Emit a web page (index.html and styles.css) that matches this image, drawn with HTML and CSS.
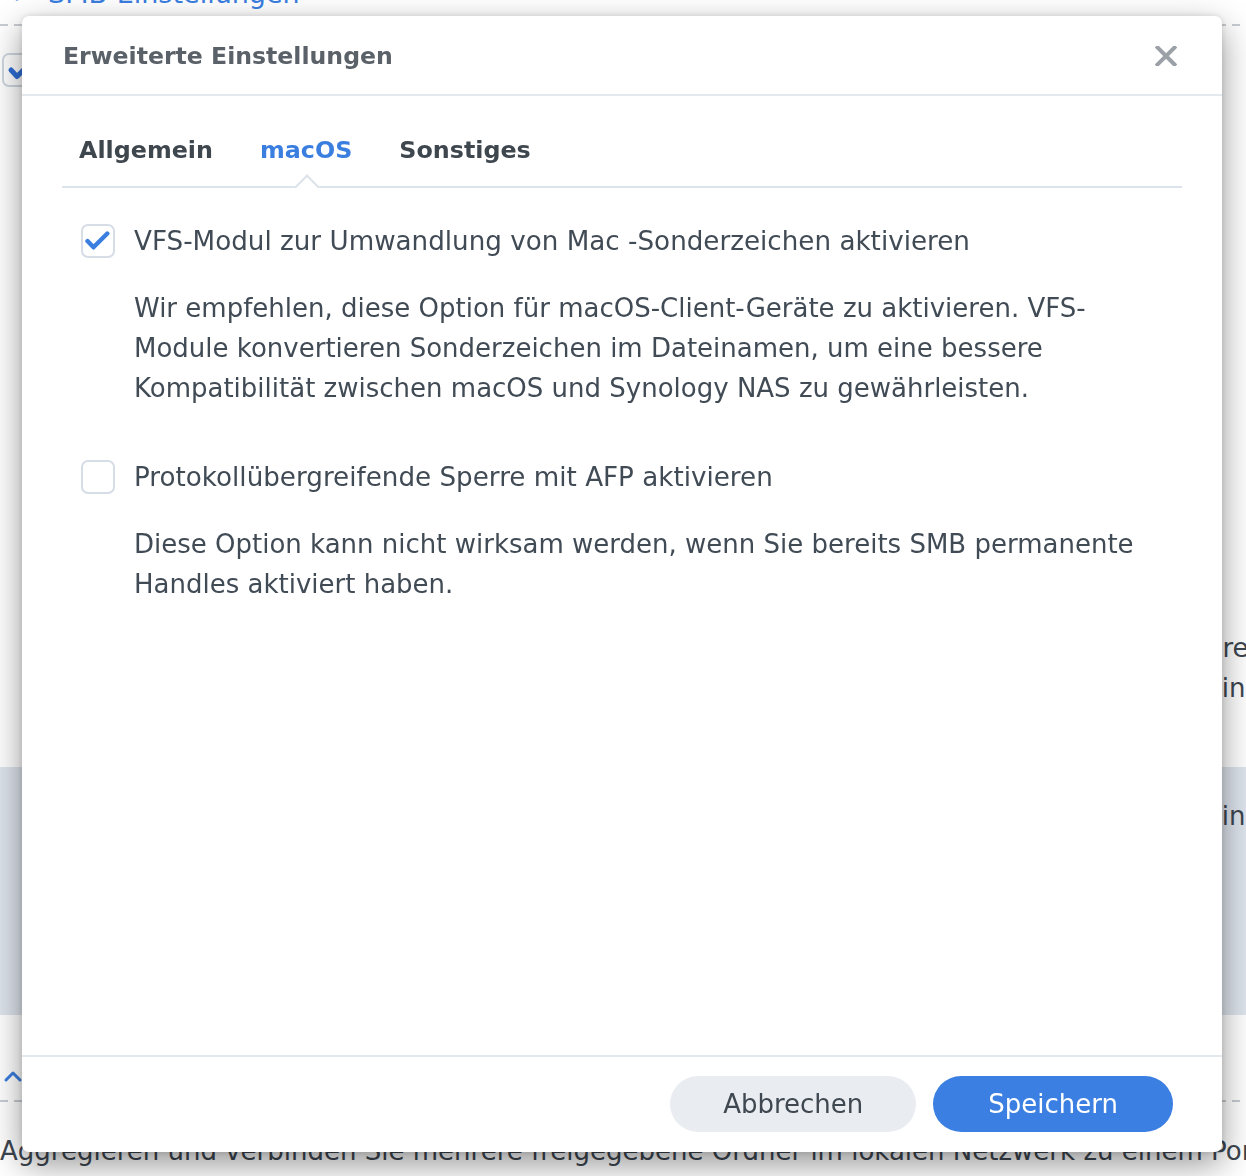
FILE: index.html
```html
<!DOCTYPE html>
<html lang="de">
<head>
<meta charset="utf-8">
<title>Erweiterte Einstellungen</title>
<link rel="stylesheet" href="styles.css">
</head>
<body>
<div class="page">
  <div class="section-head">
    <svg class="chev" width="30" height="20" viewBox="0 0 30 20"><path d="M4 6 L15 15 L26 6" fill="none" stroke="#3a7ee0" stroke-width="3.5" stroke-linecap="round" stroke-linejoin="round"/></svg>
    <span class="section-title">SMB-Einstellungen</span>
  </div>
  <div class="dash dash-top"></div>
  <div class="page-option">
    <span class="page-box">
      <svg width="34" height="34" viewBox="0 0 34 34"><path d="M9 17 L15 23.5 L28 10.5" fill="none" stroke="#2f6fd6" stroke-width="5" stroke-linecap="round" stroke-linejoin="round"/></svg>
    </span>
    <span class="page-label">SMB-Dienst aktivieren</span>
  </div>
  <p class="page-line line-a">Mindestens ein freigegebener Ordner muss vorhanden sein, um ihn konfigurieren</p>
  <p class="page-line line-b">Wählen Sie den Modus aus, der für den Dateizugriff aller Clients vorgesehen sind</p>
  <div class="page-panel">
    <p class="page-line">Die Konfiguration wird übernommen, sobald alle Geräte verbunden sind</p>
  </div>
  <div class="section-foot">
    <svg width="24" height="16" viewBox="0 0 24 16"><path d="M5 12 L12 5 L19 12" fill="none" stroke="#3a7ee0" stroke-width="3" stroke-linecap="round" stroke-linejoin="round"/></svg>
  </div>
  <div class="dash dash-bottom"></div>
  <p class="page-text">Aggregieren und verbinden Sie mehrere freigegebene Ordner im lokalen Netzwerk zu einem Portal</p>
</div>

<div class="dialog" role="dialog" aria-labelledby="dlg-title">
  <header class="dialog-head">
    <h1 id="dlg-title" class="dialog-title">Erweiterte Einstellungen</h1>
    <button class="close" type="button" aria-label="Schließen">
      <svg width="22" height="20" viewBox="0 0 22 20"><path d="M2.5 1.5 L19.5 18.5 M19.5 1.5 L2.5 18.5" stroke="#9ba1a7" stroke-width="4" stroke-linecap="square"/></svg>
    </button>
  </header>

  <nav class="tabs">
    <span class="tab">Allgemein</span>
    <span class="tab active">macOS</span>
    <span class="tab">Sonstiges</span>
  </nav>

  <main class="dialog-body">
    <div class="option">
      <span class="checkbox checked">
        <svg width="34" height="34" viewBox="0 0 34 34"><path d="M6.5 17 L12.5 23.3 L26.3 9.5" fill="none" stroke="#3a7ee0" stroke-width="4.4" stroke-linecap="round" stroke-linejoin="round"/></svg>
      </span>
      <span class="option-label">VFS-Modul zur Umwandlung von Mac -Sonderzeichen aktivieren</span>
    </div>
    <p class="option-help">Wir empfehlen, diese Option für macOS-Client-Geräte zu aktivieren. VFS-<br>Module konvertieren Sonderzeichen im Dateinamen, um eine bessere<br>Kompatibilität zwischen macOS und Synology NAS zu gewährleisten.</p>

    <div class="option option-second">
      <span class="checkbox"></span>
      <span class="option-label">Protokollübergreifende Sperre mit AFP aktivieren</span>
    </div>
    <p class="option-help">Diese Option kann nicht wirksam werden, wenn Sie bereits SMB permanente<br>Handles aktiviert haben.</p>
  </main>

  <footer class="dialog-foot">
    <button class="btn btn-cancel" type="button">Abbrechen</button>
    <button class="btn btn-primary" type="button">Speichern</button>
  </footer>
</div>
</body>
</html>
```

FILE: styles.css
```css
* { box-sizing: border-box; }

html, body {
  margin: 0;
  padding: 0;
  width: 1246px;
  height: 1176px;
  overflow: hidden;
  background: #ffffff;
  font-family: "DejaVu Sans", Verdana, sans-serif;
}

/* ---------- page behind the dialog ---------- */
.page {
  width: 1246px;
  height: 1176px;
  overflow: hidden;
  color: #3d4650;
  font-size: 26px;
}

.section-head {
  display: flex;
  align-items: center;
  gap: 16px;
  height: 40px;
  margin-top: -26px;
  padding-left: 2px;
}
.section-title {
  color: #3a7ee0;
  font-size: 27px;
  line-height: 40px;
}

.dash {
  height: 2px;
  background-image: linear-gradient(90deg, #c8cdd3 0 8px, transparent 8px 14px);
  background-size: 14px 2px;
}
.dash-top { margin-top: 10px; }

.page-option {
  display: flex;
  align-items: center;
  gap: 18px;
  margin-top: 27px;
  padding-left: 2px;
}
.page-box {
  width: 34px;
  height: 34px;
  border: 2px solid #cfd6df;
  border-radius: 7px;
  display: flex;
}
.page-box svg { margin: -2px; }

.page-line {
  margin: 0;
  height: 40px;
  line-height: 40px;
  white-space: nowrap;
  text-align: right;
}
.line-a { margin: 541px -19px 0 0; }
.line-b { margin-right: -16px; }

.page-panel {
  margin-top: 59px;
  height: 248px;
  background: #dfe5ee;
  padding-top: 29px;
}
.page-panel .page-line { margin-right: -16px; }

.section-foot {
  margin-top: 45px;
  height: 20px;
  padding-left: 1px;
}

.dash-bottom { margin-top: 20px; }

.page-text {
  margin: 29px 0 0 0;
  line-height: 40px;
  white-space: nowrap;
}

/* ---------- dialog ---------- */
.dialog {
  position: fixed;
  left: 22px;
  top: 16px;
  width: 1200px;
  height: 1136px;
  background: #ffffff;
  border-radius: 7px;
  box-shadow: 0 12px 34px rgba(0, 0, 0, 0.42), 0 0 6px rgba(0, 0, 0, 0.12);
  display: flex;
  flex-direction: column;
  color: #414b55;
}

.dialog-head {
  height: 80px;
  flex: none;
  display: flex;
  align-items: center;
  justify-content: space-between;
  padding: 2px 45px 0 41px;
  border-bottom: 2px solid #e4e9ee;
}
.dialog-title {
  margin: 0;
  font-size: 23.6px;
  font-weight: bold;
  color: #5b6168;
}
.close {
  border: 0;
  background: none;
  padding: 0;
  width: 22px;
  height: 20px;
  display: flex;
  cursor: pointer;
}

.tabs {
  flex: none;
  display: flex;
  gap: 47px;
  margin: 0 40px;
  padding: 32px 0 14px 17px;
  border-bottom: 2px solid #dde3ea;
}
.tab {
  position: relative;
  font-size: 23.8px;
  font-weight: bold;
  line-height: 44px;
  color: #3e464e;
}
.tab.active { color: #3a7ee0; }
.tab.active::after {
  content: "";
  position: absolute;
  left: 50%;
  bottom: -24px;
  width: 16px;
  height: 16px;
  margin-left: -8px;
  background: #ffffff;
  border-top: 2px solid #dde3ea;
  border-left: 2px solid #dde3ea;
  transform: rotate(45deg);
}

.dialog-body {
  flex: 1;
  padding: 33px 40px 0 59px;
  font-size: 26.2px;
  line-height: 40px;
}
.option {
  display: flex;
  align-items: center;
  gap: 19px;
}
.option-second { margin-top: 49px; }
.checkbox {
  flex: none;
  width: 34px;
  height: 34px;
  border: 2px solid #d6dde6;
  border-radius: 7px;
  display: flex;
}
.checkbox svg { margin: -2px; }
.option-label { color: #414b55; }
.option-help {
  margin: 27px 0 0 53px;
  color: #414b55;
  font-size: 26px;
}

.dialog-foot {
  flex: none;
  height: 97px;
  border-top: 2px solid #e4e9ee;
  display: flex;
  justify-content: flex-end;
  align-items: flex-start;
  gap: 17px;
  padding: 19px 49px 0 0;
}
.btn {
  height: 56px;
  border: 0;
  border-radius: 28px;
  padding: 0 53px;
  font-family: "DejaVu Sans", Verdana, sans-serif;
  font-size: 26px;
  line-height: 56px;
  cursor: pointer;
}
.btn-cancel {
  background: #e9edf1;
  color: #3f4750;
}
.btn-primary {
  background: #3b7fe2;
  color: #ffffff;
  padding: 0 55px;
}
```
